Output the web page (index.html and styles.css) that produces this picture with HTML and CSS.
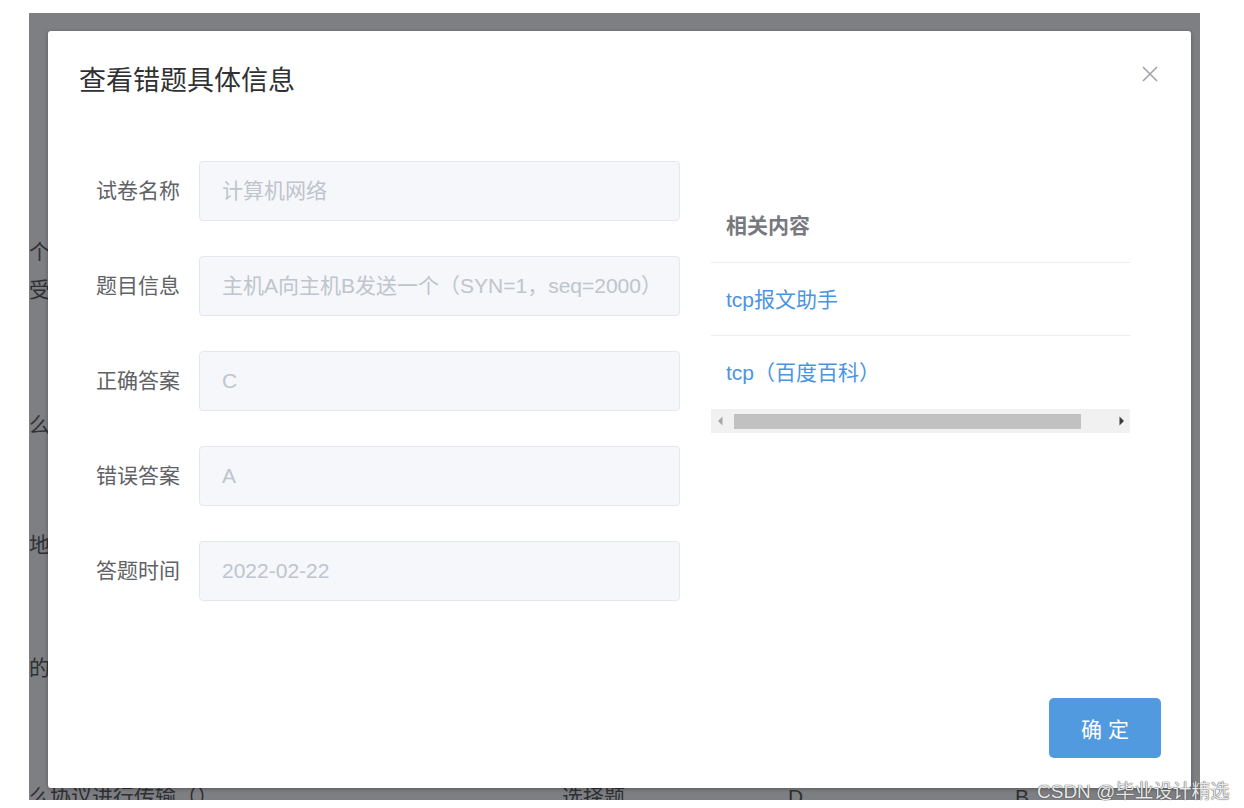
FILE: index.html
```html
<!DOCTYPE html>
<html lang="zh-CN">
<head>
<meta charset="utf-8">
<title>查看错题具体信息</title>
<link rel="stylesheet" href="styles.css">
</head>
<body>
<div class="screen">
  <div class="bg-col">
    <div class="bg-line">个</div>
    <div class="bg-line">受</div>
    <div class="bg-line m1">么</div>
    <div class="bg-line m2">地</div>
    <div class="bg-line m3">的</div>
    <div class="bg-row">
      <span class="c1">么协议进行传输（）</span>
      <span class="c2">选择题</span>
      <span class="c3">D</span>
      <span class="c4">B</span>
    </div>
  </div>

  <div class="dialog">
    <div class="dlg-header">
      <span class="dlg-title">查看错题具体信息</span>
      <button class="dlg-close" aria-label="关闭">
        <svg width="24" height="24" viewBox="0 0 24 24"><path d="M5 5 L19 19 M19 5 L5 19" stroke="#a0a3a8" stroke-width="1.6" fill="none"/></svg>
      </button>
    </div>
    <div class="dlg-body">
      <div class="form">
        <div class="label">试卷名称</div>
        <div class="input"><div class="val">计算机网络</div></div>
        <div class="label">题目信息</div>
        <div class="input"><div class="val">主机A向主机B发送一个（SYN=1，seq=2000）的TCP报文段</div></div>
        <div class="label">正确答案</div>
        <div class="input"><div class="val">C</div></div>
        <div class="label">错误答案</div>
        <div class="input"><div class="val">A</div></div>
        <div class="label">答题时间</div>
        <div class="input"><div class="val">2022-02-22</div></div>
      </div>
      <div class="panel">
        <div class="cell head">相关内容</div>
        <div class="cell item"><a class="link">tcp报文助手</a></div>
        <div class="cell item last"><a class="link">tcp（百度百科）</a></div>
        <div class="hscroll">
          <div class="arrow left"><svg width="8" height="12" viewBox="0 0 8 12"><path d="M6.5 1.5 L2 6 L6.5 10.5 Z" fill="#a6a6a6"/></svg></div>
          <div class="track"><div class="thumb"></div></div>
          <div class="arrow right"><svg width="8" height="12" viewBox="0 0 8 12"><path d="M1.5 1.5 L6 6 L1.5 10.5 Z" fill="#3c3c3c"/></svg></div>
        </div>
      </div>
    </div>
    <div class="dlg-footer">
      <button class="btn-primary">确 定</button>
    </div>
  </div>
</div>
<div class="watermark">CSDN @毕业设计精选</div>
</body>
</html>
```
FILE: styles.css
```css
* { box-sizing: border-box; }
html, body {
  margin: 0;
  padding: 0;
}
body {
  width: 1244px;
  height: 808px;
  overflow: hidden;
  background: #ffffff;
  position: relative;
  font-family: "Liberation Sans", "Noto Sans CJK SC", sans-serif;
}
.screen {
  margin: 13px 0 0 29px;
  width: 1171px;
  height: 787px;
  background: #7d7f83;
  position: relative;
  overflow: hidden;
}
.bg-col {
  padding-top: 220px;
  color: #2f3034;
  font-size: 21px;
}
.bg-line {
  line-height: 38px;
  height: 38px;
}
.bg-line.m1 { margin-top: 97px; }
.bg-line.m2 { margin-top: 82px; }
.bg-line.m3 { margin-top: 85px; }
.bg-row {
  margin-top: 95px;
  display: flex;
  line-height: 30px;
  white-space: nowrap;
}
.bg-row .c1 { width: 533px; }
.bg-row .c2 { width: 226px; }
.bg-row .c3 { width: 227px; }

.dialog {
  position: absolute;
  left: 19px;
  top: 18px;
  width: 1143px;
  height: 757px;
  background: #ffffff;
  border-radius: 3px;
  box-shadow: 0 1px 4px rgba(0,0,0,0.3);
  display: flex;
  flex-direction: column;
}
.dlg-header {
  position: relative;
  padding: 32px 30px 0 31px;
  height: 66px;
}
.dlg-title {
  display: block;
  font-size: 27px;
  line-height: 36px;
  color: #303133;
}
.dlg-close {
  position: absolute;
  top: 31px;
  right: 29px;
  width: 24px;
  height: 24px;
  padding: 0;
  border: 0;
  background: transparent;
}
.dlg-close svg { display: block; }
.dlg-body {
  display: flex;
  align-items: flex-start;
  padding: 64px 0 0 30px;
}
.form {
  display: grid;
  grid-template-columns: 121px 481px;
  grid-auto-rows: 60px;
  row-gap: 35px;
}
.label {
  font-size: 21px;
  color: #606266;
  text-align: right;
  padding-right: 19px;
  line-height: 60px;
  white-space: nowrap;
}
.input {
  background: #f5f7fa;
  border: 1px solid #e4e7ed;
  border-radius: 4px;
  padding: 0 22px 0 22px;
  font-size: 21px;
  color: #c0c4cc;
  line-height: 58px;
}
.val {
  overflow: hidden;
  white-space: nowrap;
}
.panel {
  margin: 29px 0 0 31px;
  width: 419px;
}
.cell {
  height: 73px;
  line-height: 72px;
  padding-left: 15px;
  border-bottom: 1px solid #ebeef5;
  font-size: 21px;
}
.cell.item {
  padding-top: 2px;
  line-height: 70px;
}
.cell.head {
  font-weight: bold;
  color: #77797e;
}
.cell.last {
  border-bottom: 0;
}
.link {
  color: #4a95e2;
  text-decoration: none;
}
.hscroll {
  display: flex;
  align-items: center;
  height: 24px;
  background: #f1f1f1;
}
.arrow {
  width: 17px;
  height: 24px;
  display: flex;
  align-items: center;
  justify-content: center;
}
.track {
  flex: 1;
  display: flex;
  align-items: center;
  height: 24px;
}
.thumb {
  margin-left: 6px;
  width: 347px;
  height: 15px;
  background: #c1c1c1;
}
.dlg-footer {
  margin-top: auto;
  display: flex;
  justify-content: flex-end;
  padding: 0 30px 30px 0;
}
.btn-primary {
  width: 112px;
  height: 60px;
  border: 0;
  border-radius: 5px;
  background: #519ae0;
  color: #ffffff;
  font-size: 21px;
  font-family: "Liberation Sans", "Noto Sans CJK SC", sans-serif;
}
.watermark {
  position: absolute;
  left: 1037px;
  top: 780px;
  font-size: 19px;
  line-height: 24px;
  color: rgba(255,255,255,0.9);
  text-shadow: 0 0 1px rgba(60,60,60,0.9), 0 0 1px rgba(60,60,60,0.9);
  white-space: nowrap;
}
```
